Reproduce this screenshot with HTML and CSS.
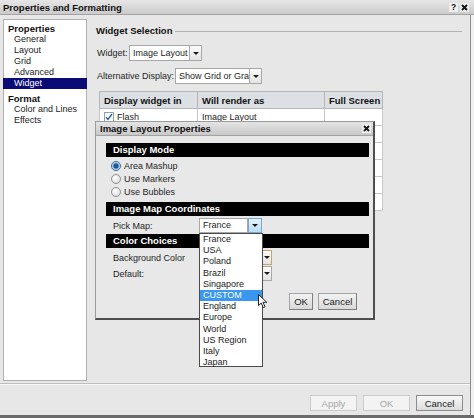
FILE: index.html
```html
<!DOCTYPE html>
<html>
<head>
<meta charset="utf-8">
<title>Properties and Formatting</title>
<link rel="stylesheet" href="styles.css">
</head>
<body>
<div class="window">
  <div class="titlebar">
    <span class="title">Properties and Formatting</span>
    <span class="tb-btns">
      <span class="tb-btn">?</span>
      <span class="tb-btn"><svg width="7" height="7" viewBox="0 0 7 7"><path d="M1 1L6 6M6 1L1 6" stroke="#111" stroke-width="1.8"/></svg></span>
    </span>
  </div>
  <div class="frame">
    <div class="main">
      <nav class="nav">
        <div class="nav-group">Properties</div>
        <div class="nav-item">General</div>
        <div class="nav-item">Layout</div>
        <div class="nav-item">Grid</div>
        <div class="nav-item">Advanced</div>
        <div class="nav-item active">Widget</div>
        <div class="nav-group gap">Format</div>
        <div class="nav-item">Color and Lines</div>
        <div class="nav-item">Effects</div>
      </nav>
      <section class="content">
        <div class="section-head"><span>Widget Selection</span><span class="rule"></span></div>
        <div class="field-row first">
          <span class="lbl lbl-widget">Widget:</span>
          <span class="sel-text w-61">Image Layout</span><span class="sel-btn"><i class="tri"></i></span>
        </div>
        <div class="field-row">
          <span class="lbl lbl-alt">Alternative Display:</span>
          <span class="sel-text w-75">Show Grid or Graph</span><span class="sel-btn"><i class="tri"></i></span>
        </div>
        <table class="grid">
          <colgroup><col class="c1"><col class="c2"><col class="c3"></colgroup>
          <thead>
            <tr><th>Display widget in</th><th>Will render as</th><th>Full Screen</th></tr>
          </thead>
          <tbody>
            <tr><td><span class="cb"><svg width="8" height="8" viewBox="0 0 8 8"><path d="M1 4.2L3 6.5L7 1" fill="none" stroke="#2a5d9c" stroke-width="1.4"/></svg></span><span class="cb-text">Flash</span></td><td>Image Layout</td><td></td></tr>
            <tr><td></td><td></td><td></td></tr>
            <tr><td></td><td></td><td></td></tr>
            <tr><td></td><td></td><td></td></tr>
            <tr><td></td><td></td><td></td></tr>
            <tr><td></td><td></td><td></td></tr>
          </tbody>
        </table>
      </section>
    </div>
    <div class="footer">
      <span class="btn disabled">Apply</span>
      <span class="btn disabled">OK</span>
      <span class="btn">Cancel</span>
    </div>
  </div>
  <div class="bottomband"></div>

  <div class="dialog">
    <div class="dlg-title">
      <span>Image Layout Properties</span>
      <span class="tb-btn"><svg width="7" height="7" viewBox="0 0 7 7"><path d="M1 1L6 6M6 1L1 6" stroke="#111" stroke-width="1.8"/></svg></span>
    </div>
    <div class="dlg-body">
      <div class="bar">Display Mode</div>
      <div class="radios">
        <div class="radio-row"><span class="radio on"></span><span>Area Mashup</span></div>
        <div class="radio-row"><span class="radio"></span><span>Use Markers</span></div>
        <div class="radio-row"><span class="radio"></span><span>Use Bubbles</span></div>
      </div>
      <div class="bar bar-map">Image Map Coordinates</div>
      <div class="dlg-row pick">
        <span class="dlg-label">Pick Map:</span>
        <span class="sel-text w-49">France</span><span class="sel-btn active"><i class="tri"></i></span>
      </div>
      <div class="bar bar-color">Color Choices</div>
      <div class="dlg-row bg-row">
        <span class="dlg-label">Background Color</span>
        <span class="sel-text w-63"></span><span class="sel-btn narrow warm"><i class="tri"></i></span>
      </div>
      <div class="dlg-row def-row">
        <span class="dlg-label">Default:</span>
        <span class="sel-text w-63"></span><span class="sel-btn narrow"><i class="tri"></i></span>
      </div>
      <div class="dlg-actions">
        <span class="dbtn w-ok">OK</span>
        <span class="dbtn w-cancel">Cancel</span>
      </div>
    </div>
  </div>

  <ul class="dropdown">
    <li>France</li>
    <li>USA</li>
    <li>Poland</li>
    <li>Brazil</li>
    <li>Singapore</li>
    <li class="hl">CUSTOM</li>
    <li>England</li>
    <li>Europe</li>
    <li>World</li>
    <li>US Region</li>
    <li>Italy</li>
    <li>Japan</li>
  </ul>

  <svg class="cursor" width="10" height="15" viewBox="0 0 10 15">
    <path d="M0.5 0.5V11.5L3.2 9L5.2 13.6L7 12.8L5 8.3H8.8Z" fill="#fff" stroke="#222" stroke-width="1"/>
  </svg>
</div>
</body>
</html>
```
FILE: styles.css
```css
* { box-sizing: border-box; margin: 0; padding: 0; }
html, body { width: 474px; height: 418px; overflow: hidden; }
body {
  font-family: "Liberation Sans", Arial, sans-serif;
  font-size: 9px;
  color: #1e1e1e;
  background: #f1f1f1;
}
.window {
  position: relative;
  width: 474px;
  height: 418px;
  display: flex;
  flex-direction: column;
}

/* Title bar */
.titlebar {
  height: 15px;
  flex: none;
  display: flex;
  align-items: center;
  justify-content: space-between;
  padding: 0 5px 0 3px;
  background: linear-gradient(#e6e6e6, #cbcbcb);
  border-bottom: 1px solid #a3a3a3;
}
.title { font-weight: bold; font-size: 9.5px; color: #111; }
.tb-btns { display: flex; gap: 2px; }
.tb-btn {
  width: 9px;
  height: 9px;
  background: #efefef;
  display: flex;
  align-items: center;
  justify-content: center;
  font-weight: bold;
  font-size: 8.5px;
  line-height: 1;
  color: #111;
}

/* Frame */
.frame {
  width: 471px;
  height: 400px;
  flex: none;
  background: #e7e7e7;
  border-right: 1px solid #8b8b8b;
  display: flex;
  flex-direction: column;
}
.main {
  height: 368px;
  flex: none;
  display: flex;
  padding: 4px 0 0 3px;
}

/* Nav */
.nav {
  width: 84px;
  height: 362px;
  flex: none;
  background: #fff;
  border: 1px solid #b0b0b0;
  padding-top: 3px;
}
.nav-group {
  height: 11px;
  line-height: 11px;
  padding-left: 4px;
  font-weight: bold;
  font-size: 9.5px;
  color: #111;
}
.nav-group.gap { margin-top: 4px; }
.nav-item {
  height: 11px;
  line-height: 11px;
  padding-left: 10px;
  color: #222;
}
.nav-item.active {
  background: #0b0b76;
  color: #fff;
  margin: 0 -1px;
  padding-left: 11px;
}

/* Content */
.content {
  flex: 1;
  padding: 5px 8px 0 9px;
}
.section-head {
  display: flex;
  align-items: center;
  height: 12px;
  gap: 3px;
  font-weight: bold;
  font-size: 9.5px;
  color: #111;
}
.rule { flex: 1; border-top: 1px solid #b2b2b2; margin-top: 2px; }

.field-row {
  display: flex;
  align-items: center;
  height: 16px;
  margin-top: 7px;
  padding-left: 1px;
}
.field-row.first { margin-top: 9px; }
.lbl-widget { width: 32px; }
.lbl-alt { width: 78px; }

.sel-text {
  height: 16px;
  border: 1px solid #a7a7a7;
  background: #fff;
  padding-left: 3px;
  line-height: 14px;
  overflow: hidden;
  white-space: nowrap;
}
.sel-btn {
  width: 12px;
  height: 16px;
  border: 1px solid #a7a7a7;
  border-left: none;
  background: linear-gradient(#fbfbfb, #e3e3e3);
  display: flex;
  align-items: center;
  justify-content: center;
}
.sel-btn.active {
  width: 14px;
  border: 1px solid #7aa7cf;
  background: linear-gradient(#e4f2fc, #bcdcf3);
}
.sel-btn.narrow { width: 10px; }
.sel-btn.warm { border-color: #c9a46c; }
.tri {
  display: block;
  width: 0;
  height: 0;
  border-left: 3px solid transparent;
  border-right: 3px solid transparent;
  border-top: 3px solid #1a1a1a;
}
.w-61 { width: 61px; }
.w-75 { width: 75px; }
.w-49 { width: 49px; }
.w-63 { width: 63px; }

/* Table */
.grid {
  margin: 7px 0 0 3px;
  width: 283px;
  border-collapse: collapse;
  table-layout: fixed;
}
.c1 { width: 98px; }
.c2 { width: 127px; }
.c3 { width: 58px; }
.grid th {
  height: 17px;
  border: 1px solid #b5b5b5;
  background: #dcdfe3;
  text-align: left;
  padding-left: 4px;
  font-weight: bold;
  font-size: 9.5px;
  color: #111;
}
.grid td {
  height: 17px;
  border: 1px solid #c8c8c8;
  background: #fff;
  padding-left: 4px;
  white-space: nowrap;
}
.cb {
  display: inline-flex;
  align-items: center;
  justify-content: center;
  width: 10px;
  height: 10px;
  border: 1px solid #8aa0b6;
  background: #fff;
  vertical-align: middle;
}
.cb-text { margin-left: 3px; vertical-align: middle; }

/* Footer */
.footer {
  height: 32px;
  flex: none;
  border-top: 1px solid #bdbdbd;
  box-shadow: inset 0 1px 0 #f8f8f8;
  display: flex;
  justify-content: flex-end;
  gap: 6px;
  padding: 11px 7px 0 0;
}
.btn {
  width: 47px;
  height: 16px;
  border: 1px solid #8d8d8d;
  background: linear-gradient(#f9f9f9, #dcdcdc);
  display: flex;
  align-items: center;
  justify-content: center;
  font-size: 9.5px;
  color: #222;
}
.btn.disabled {
  color: #a6a6a6;
  border-color: #cbcbcb;
  background: #f3f3f3;
}
.bottomband { height: 3px; flex: none; background: #6b6b6b; }

/* Dialog */
.dialog {
  position: absolute;
  left: 95px;
  top: 121px;
  width: 280px;
  height: 199px;
  background: #e8e8e8;
  border: 1px solid #9b9b9b;
  border-right: 2px solid #4e4e4e;
  border-bottom: 2px solid #4e4e4e;
}
.dlg-title {
  height: 14px;
  display: flex;
  align-items: center;
  justify-content: space-between;
  padding: 0 2px 0 4px;
  background: linear-gradient(#e4e4e4, #c9c9c9);
  border-bottom: 1px solid #a2a2a2;
  font-weight: bold;
  font-size: 9.5px;
  color: #111;
}
.dlg-body { padding: 7px 4px 0 10px; }
.bar {
  height: 14px;
  background: #000;
  color: #fff;
  font-weight: bold;
  font-size: 9.5px;
  line-height: 14px;
  padding-left: 7px;
}
.radios { margin-top: 2px; }
.radio-row {
  height: 13px;
  display: flex;
  align-items: center;
  padding-left: 5px;
  gap: 3px;
}
.radio {
  width: 10px;
  height: 10px;
  border-radius: 50%;
  border: 1px solid #8f8f8f;
  background: radial-gradient(circle at 40% 35%, #ffffff, #d6d6d6);
}
.radio.on {
  border-color: #3f668e;
  background: radial-gradient(circle, #1b5b98 0 2.2px, #6fa9dc 2.8px, #e9f3fc 4px);
}
.bar-map { margin-top: 4px; }
.bar-color { margin-top: 1px; }
.dlg-row {
  display: flex;
  align-items: center;
  height: 15px;
  padding-left: 7px;
}
.dlg-row .sel-text, .dlg-row .sel-btn { height: 15px; line-height: 13px; }
.dlg-label { width: 86px; }
.pick { margin-top: 2px; }
.bg-row { margin-top: 2px; }
.def-row { margin-top: 1px; }
.dlg-actions {
  display: flex;
  justify-content: flex-end;
  gap: 5px;
  margin-top: 12px;
  padding-right: 12px;
}
.dbtn {
  height: 17px;
  border: 1px solid #a3a3a3;
  border-right-color: #7d7d7d;
  border-bottom-color: #7d7d7d;
  background: linear-gradient(#f3f3f3, #d9d9d9);
  display: flex;
  align-items: center;
  justify-content: center;
  font-size: 9.5px;
  color: #222;
}
.w-ok { width: 24px; }
.w-cancel { width: 39px; }

/* Dropdown list */
.dropdown {
  position: absolute;
  left: 199px;
  top: 233px;
  width: 64px;
  height: 134px;
  background: #fff;
  border: 1px solid #4a4a4a;
  list-style: none;
}
.dropdown li {
  height: 11.2px;
  line-height: 11.2px;
  padding-left: 3px;
  color: #222;
  white-space: nowrap;
}
.dropdown li.hl { background: #3a97ef; color: #fff; }

.cursor {
  position: absolute;
  left: 258px;
  top: 294px;
}
```
